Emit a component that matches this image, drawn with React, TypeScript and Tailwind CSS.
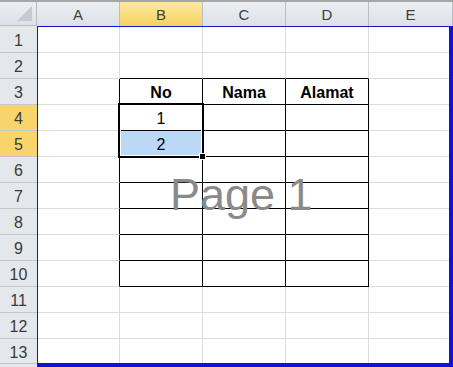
const COLS = ['A', 'B', 'C', 'D', 'E']
const COL_W = ['w-[82px]', 'w-[83px]', 'w-[83px]', 'w-[83px]', 'w-[80px]']
const ROWS = Array.from({ length: 13 }, (_, i) => i + 1)

const CELLS: Record<string, { text: string; bold?: boolean }> = {
  '3-1': { text: 'No', bold: true },
  '3-2': { text: 'Nama', bold: true },
  '3-3': { text: 'Alamat', bold: true },
  '4-1': { text: '1' },
  '5-1': { text: '2' },
}

function cellClass(r: number, c: number) {
  const inTableRows = r >= 3 && r <= 10
  const rightBlack = inTableRows && c <= 3
  const bottomBlack = r >= 2 && r <= 10 && c >= 1 && c <= 3
  const last = r === 13
  const parts = [
    COL_W[c],
    last ? 'h-[24px]' : 'h-[26px] border-b',
    bottomBlack ? 'border-b-black' : 'border-b-[#dadcdd]',
    c < 4 ? 'border-r' : '',
    rightBlack ? 'border-r-black' : 'border-r-[#dadcdd]',
    r === 5 && c === 1 ? 'bg-[#bcd8f7]' : '',
  ]
  return parts.join(' ')
}

export default function App() {
  return (
    <div className="w-[453px] h-[367px] bg-white overflow-hidden font-['Liberation_Sans',Arial,sans-serif] text-black">
      {/* Column headers */}
      <div className="flex h-[26px] border-t-2 border-t-[#a6a6a6]">
        <div className="relative w-[37px] h-full border-r border-b border-[#b9bec6] bg-gradient-to-b from-[#eceef2] to-[#dde1e7]">
          <div className="absolute right-[4px] bottom-[4px] w-0 h-0 border-l-[15px] border-l-transparent border-b-[15px] border-b-[#c6cad0]" />
        </div>
        {COLS.map((col, i) => (
          <div
            key={col}
            className={`${i === 4 ? 'flex-1' : 'w-[83px]'} h-full flex items-center justify-center pt-[2px] border-r border-[#b9bec6] text-[15px] text-[#3c3f44] ${
              col === 'B'
                ? 'bg-gradient-to-b from-[#fdea9d] to-[#f6d160]'
                : 'bg-gradient-to-b from-[#eceef2] to-[#dde1e7]'
            }`}
          >
            {col}
          </div>
        ))}
      </div>

      <div className="flex">
        {/* Row headers */}
        <div className="w-[37px] h-[341px] flex flex-col bg-[#e4e7ec]">
          {ROWS.map(r => (
            <div
              key={r}
              className={`${r === 1 ? 'h-[27px]' : r === 13 ? 'h-[25px]' : 'h-[26px]'} flex items-center justify-center pt-[3px] border-b border-[#c3c8cf] text-[16px] text-[#3a3a3a] ${
                r === 4 || r === 5 ? 'bg-[#f8d46c]' : 'bg-[#e4e7ec]'
              }`}
            >
              {r}
            </div>
          ))}
        </div>

        {/* Page area */}
        <div className="relative flex-1 border-l border-t border-r-4 border-b-4 border-[#1212d2]">
          {ROWS.map(r => (
            <div key={r} className="flex">
              {COLS.map((col, c) => {
                const cell = CELLS[`${r}-${c}`]
                return (
                  <div key={col} className={`${cellClass(r, c)} flex items-center justify-center pt-[2px] text-[16px]`}>
                    {cell && <span className={cell.bold ? 'font-bold' : ''}>{cell.text}</span>}
                  </div>
                )
              })}
            </div>
          ))}

          {/* Watermark */}
          <div className="absolute left-[132px] top-[145px] text-[45px] leading-none text-[#8a8a8a] pointer-events-none">
            Page 1
          </div>

          {/* Selection B4:B5 */}
          <div className="absolute left-[80px] top-[76px] w-[86px] h-[55px] border-2 border-black pointer-events-none">
            <div className="w-full h-full border border-white" />
          </div>
          <div className="absolute left-[161px] top-[126px] w-[7px] h-[7px] bg-black border border-white" />
        </div>
      </div>
    </div>
  )
}
